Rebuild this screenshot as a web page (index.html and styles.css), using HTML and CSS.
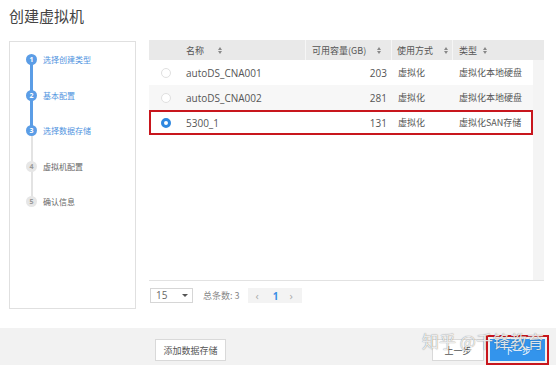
FILE: index.html
```html
<!DOCTYPE html>
<html lang="zh-CN">
<head>
  <meta charset="UTF-8" />
  <title>创建虚拟机</title>
  <link rel="stylesheet" href="styles.css">
</head>
<body>
  <h1 class="title">创建虚拟机</h1>

  <div class="main">
    <!-- Wizard steps -->
    <div class="steps">
      <div class="step done"><span class="dot">1</span><span class="label">选择创建类型</span></div>
      <div class="step done"><span class="dot">2</span><span class="label">基本配置</span></div>
      <div class="step current"><span class="dot">3</span><span class="label">选择数据存储</span></div>
      <div class="step"><span class="dot">4</span><span class="label">虚拟机配置</span></div>
      <div class="step last"><span class="dot">5</span><span class="label">确认信息</span></div>
    </div>

    <!-- Datastore table -->
    <div class="grid-wrap">
      <div class="thead">
        <div class="th"></div>
        <div class="th th-name">名称<i class="sort"></i></div>
        <div class="th th-cap sep">可用容量(GB)<i class="sort"></i></div>
        <div class="th th-use sep">使用方式<i class="sort"></i></div>
        <div class="th th-type sep">类型<i class="sort"></i></div>
      </div>
      <div class="tbody">
        <div class="rows">
          <div class="row">
            <div class="td"><span class="radio"></span></div>
            <div class="td td-name">autoDS_CNA001</div>
            <div class="td td-cap">203</div>
            <div class="td td-use">虚拟化</div>
            <div class="td td-type">虚拟化本地硬盘</div>
          </div>
          <div class="row striped">
            <div class="td"><span class="radio"></span></div>
            <div class="td td-name">autoDS_CNA002</div>
            <div class="td td-cap">281</div>
            <div class="td td-use">虚拟化</div>
            <div class="td td-type">虚拟化本地硬盘</div>
          </div>
          <div class="row selected">
            <div class="td"><span class="radio checked"></span></div>
            <div class="td td-name">5300_1</div>
            <div class="td td-cap">131</div>
            <div class="td td-use">虚拟化</div>
            <div class="td td-type">虚拟化SAN存储</div>
          </div>
        </div>
        <div class="scroll-track"></div>
      </div>

      <div class="pager">
        <div class="page-size">15<i class="caret"></i></div>
        <span class="total">总条数: 3</span>
        <div class="pages">
          <span class="nav">&lsaquo;</span>
          <span class="page-num">1</span>
          <span class="nav">&rsaquo;</span>
        </div>
      </div>
    </div>
  </div>

  <div class="footer">
    <button class="btn btn-add">添加数据存储</button>
    <div class="footer-right">
      <button class="btn btn-prev">上一步</button>
      <button class="btn btn-next">下一步</button>
    </div>
  </div>

  <div class="watermark">知乎 @千锋教育</div>
</body>
</html>
```

FILE: styles.css
```css
:root {
  --blue: #3a8ee6;
  --step-blue: #5b9de6;
  --line: #e2e2e2;
  --text: #555;
}
html, body {
  margin: 0; padding: 0;
  background: #fff;
}
body {
  width: 556px; height: 365px;
  position: relative;
  overflow: hidden;
  font-family: "Open Sans", "Noto Sans CJK SC", sans-serif;
  font-size: 9px;
  color: var(--text);
}

.title {
  margin: 0;
  height: 40px;
  box-sizing: border-box;
  padding: 6px 0 0 9px;
  font-family: "Noto Sans CJK SC", sans-serif;
  font-size: 15px;
  line-height: 20px;
  font-weight: 400;
  color: #444;
}

.main {
  display: flex;
  height: 288px;
  padding-left: 9px;
}

/* Steps */
.steps {
  width: 127px;
  height: 268px;
  margin-top: 1px;
  box-sizing: border-box;
  border: 1px solid #e0e0e0;
  padding: 0 0 0 16px;
}
.step {
  position: relative;
  display: flex;
  align-items: center;
  height: 35.5px;
}
.step .dot {
  width: 11px; height: 11px;
  border-radius: 50%;
  background: #e6e6e6;
  color: #999;
  font-size: 7px;
  line-height: 11px;
  text-align: center;
  font-weight: bold;
  flex: none;
  position: relative;
  z-index: 1;
}
.step .label {
  margin-left: 6px;
  font-family: "Noto Sans CJK SC", sans-serif;
  font-size: 8px;
  color: #666;
}
.step::after {
  content: '';
  position: absolute;
  left: 4.5px;
  top: 22px;
  width: 2px;
  height: 32px;
  background: #e3e3e3;
}
.step.last::after { display: none; }
.step.done::after { background: var(--step-blue); width: 3px; left: 4px; }
.step.done .dot, .step.current .dot {
  background: var(--step-blue);
  color: #fff;
}
.step.done .label, .step.current .label { color: #4f93e0; }

/* Table */
.grid-wrap {
  width: 395px;
  margin-left: 13px;
}
.thead, .row {
  display: grid;
  grid-template-columns: 27px 129px 86px 61px 81px;
}
.thead {
  grid-template-columns: 27px 129px 86px 61px 92px;
  height: 20px;
  background: #e9e9e9;
}
.th {
  display: flex;
  align-items: center;
  font-family: "Noto Sans CJK SC", sans-serif;
  color: #555;
}
.th.sep { border-left: 1px solid #f6f6f6; }
.th-name { padding-left: 10px; }
.th-name .sort { margin-left: 14px; }
.th-cap { padding-left: 6px; }
.th-cap .sort { margin-left: 11px; }
.th-use { padding-left: 5px; }
.th-use .sort { margin-left: 11px; }
.th-type { padding-left: 6px; }
.th-type .sort { margin-left: 6px; }

.sort {
  display: inline-flex;
  flex-direction: column;
  gap: 1px;
}
.sort::before, .sort::after {
  content: '';
  border-left: 2px solid transparent;
  border-right: 2px solid transparent;
}
.sort::before { border-bottom: 3px solid #888; }
.sort::after { border-top: 3px solid #888; }

.tbody {
  display: flex;
  height: 220px;
  border-bottom: 1px solid var(--line);
}
.rows { flex: 1; }
.scroll-track {
  width: 11px;
  background: #f4f4f4;
}
.row {
  height: 25px;
  align-items: center;
}
.row.striped { background: #f7f7f7; }
.row.selected {
  outline: 2px solid #c8161d;
  outline-offset: -2px;
}
.td {
  color: #555;
  font-family: "Noto Sans CJK SC", sans-serif;
  white-space: nowrap;
}
.td-name, .td-cap {
  font-family: "Open Sans", sans-serif;
  font-size: 10px;
}
.td-name { padding-left: 10px; }
.td-cap { text-align: right; padding-right: 4px; }
.td-use { padding-left: 7px; }
.td-type { padding-left: 7px; }

.radio {
  display: block;
  width: 10px; height: 10px;
  margin-left: 12px;
  box-sizing: border-box;
  border: 1px solid #e0e0e0;
  border-radius: 50%;
  background: #fff;
}
.radio.checked {
  border: 3px solid #2f88e0;
}

/* Pagination */
.pager {
  display: flex;
  align-items: center;
  margin-top: 7px;
  height: 15px;
}
.page-size {
  position: relative;
  width: 43px; height: 15px;
  margin-left: 1px;
  box-sizing: border-box;
  border: 1px solid #d6d6d6;
  padding-left: 5px;
  line-height: 13px;
  font-size: 10px;
  color: #666;
}
.caret {
  position: absolute;
  right: 4px; top: 5px;
  border-left: 3px solid transparent;
  border-right: 3px solid transparent;
  border-top: 3px solid #555;
}
.total {
  margin-left: 10px;
  font-family: "Noto Sans CJK SC", sans-serif;
  color: #888;
}
.pages {
  display: flex;
  align-items: center;
  margin-left: 8px;
  width: 54px; height: 15px;
  background: #f3f3f3;
  font-size: 11px;
}
.pages .nav { color: #aaa; }
.pages .nav:first-child { margin-left: 8px; }
.page-num {
  margin: 0 11px 0 14px;
  color: var(--blue);
  font-weight: bold;
  font-size: 10px;
}

/* Footer */
.footer {
  display: flex;
  height: 37px;
  box-sizing: border-box;
  padding: 11px 11px 0 155px;
  background: #f2f2f2;
}
.footer-right {
  margin-left: auto;
  display: flex;
  gap: 6px;
}
.btn {
  height: 22px;
  box-sizing: border-box;
  border: 1px solid #d9d9d9;
  background: #fff;
  font-family: "Noto Sans CJK SC", sans-serif;
  font-size: 9px;
  color: #555;
  padding: 0;
}
.btn-add { width: 71px; }
.btn-prev { width: 52px; }
.btn-next {
  width: 55px;
  border: none;
  background: #3394ec;
  color: #fff;
  outline: 2px solid #c8161d;
  outline-offset: 2px;
}

.watermark {
  position: absolute;
  left: 422px; top: 328px;
  font-family: "Noto Sans CJK SC", sans-serif;
  font-size: 17px;
  color: rgba(255,255,255,0.85);
  text-shadow: 0 0 1px rgba(0,0,0,0.55);
  pointer-events: none;
}
```
